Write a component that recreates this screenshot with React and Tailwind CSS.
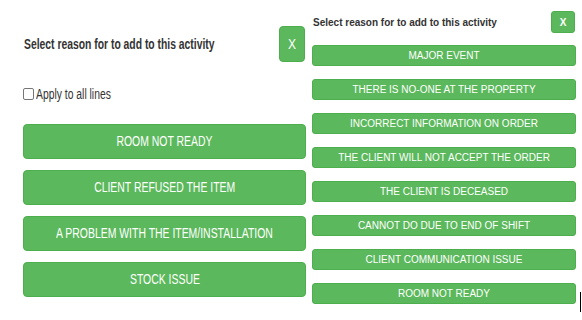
const leftReasons = [
  'ROOM NOT READY',
  'CLIENT REFUSED THE ITEM',
  'A PROBLEM WITH THE ITEM/INSTALLATION',
  'STOCK ISSUE',
]

const rightReasons = [
  'MAJOR EVENT',
  'THERE IS NO-ONE AT THE PROPERTY',
  'INCORRECT INFORMATION ON ORDER',
  'THE CLIENT WILL NOT ACCEPT THE ORDER',
  'THE CLIENT IS DECEASED',
  'CANNOT DO DUE TO END OF SHIFT',
  'CLIENT COMMUNICATION ISSUE',
  'ROOM NOT READY',
]

export default function App() {
  return (
    <div className="relative flex h-[320px] w-[582px] overflow-hidden bg-white font-['Liberation_Sans',Arial,sans-serif]">
      {/* first dialog */}
      <div className="w-[306px] shrink-0 pl-[23px] pt-[26px]">
        <div className="flex h-[36px] items-center justify-between">
          <div className="min-w-0 flex-1">
            <span className="ml-[1px] inline-block origin-left scale-x-[0.74] whitespace-nowrap text-[14px] font-bold text-[#333]">
              Select reason for to add to this activity
            </span>
          </div>
          <button className="mr-[1px] flex h-[36px] w-[26px] shrink-0 items-center justify-center rounded-[4px] border border-[#4cae4c] bg-[#5cb85c] text-[15px] text-white">
            <span className="inline-block scale-x-[0.8]">X</span>
          </button>
        </div>

        <label className="mt-[25px] flex h-[14px] items-center">
          <span className="h-[12px] w-[11px] shrink-0 rounded-[2px] border border-[#767676] bg-white" />
          <span className="ml-[2px] inline-block origin-left scale-x-[0.74] whitespace-nowrap text-[14px] leading-[14px] text-[#333]">
            Apply to all lines
          </span>
        </label>

        <div className="mt-[23px] flex flex-col gap-[11px]">
          {leftReasons.map((r) => (
            <button
              key={r}
              className="flex h-[35px] w-full items-center justify-center rounded-[4px] border border-[#4cae4c] bg-[#5cb85c] text-[14px] text-white"
            >
              <span className="inline-block scale-x-[0.745] whitespace-nowrap">{r}</span>
            </button>
          ))}
        </div>
      </div>

      {/* second dialog */}
      <div className="ml-[6px] w-[264px] shrink-0 pt-[11px]">
        <div className="flex h-[22px] items-center justify-between">
          <span className="ml-[1px] whitespace-nowrap text-[10px] font-bold text-[#333]">
            Select reason for to add to this activity
          </span>
          <button className="mr-[1px] flex h-[22px] w-[24px] shrink-0 items-center justify-center rounded-[3px] border border-[#4cae4c] bg-[#5cb85c] text-[10px] font-bold text-white">
            X
          </button>
        </div>

        <div className="mt-[12px] flex flex-col gap-[13px]">
          {rightReasons.map((r) => (
            <button
              key={r}
              className="flex h-[21px] w-full items-center justify-center rounded-[3px] border border-[#4cae4c] bg-[#5cb85c] text-[10px] text-white"
            >
              <span className="whitespace-nowrap">{r}</span>
            </button>
          ))}
        </div>
      </div>

      {/* text cursor */}
      <div className="absolute left-[580px] top-[292px] h-[20px] w-[1px] bg-black" />
    </div>
  )
}
